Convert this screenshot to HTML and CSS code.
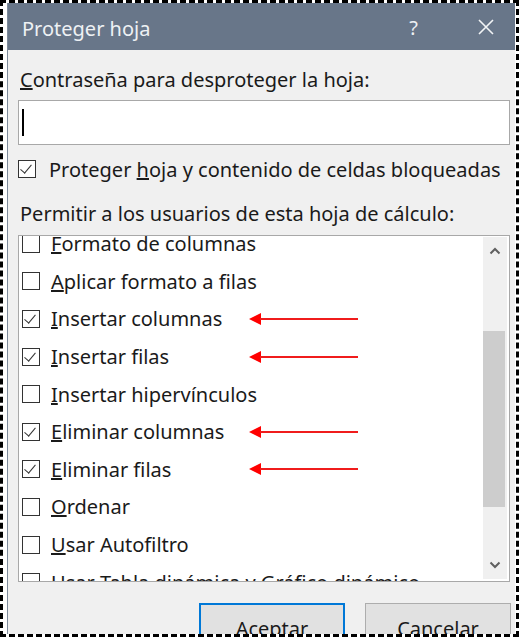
FILE: index.html
```html
<!DOCTYPE html>
<html lang="es">
<head>
    <meta charset="UTF-8">
    <title>Proteger hoja</title>
    <link rel="stylesheet" href="styles.css">
</head>
<body>
    <div class="frame">
        <div class="dialog">
            <div class="titlebar">
                <span class="title">Proteger hoja</span>
                <span class="help">?</span>
                <svg class="close" width="16" height="16" viewBox="0 0 16 16"><path d="M1 1 L15 15 M15 1 L1 15" stroke="#f2f4f6" stroke-width="1.6" fill="none"/></svg>
            </div>
            <div class="body">
                <label class="label"><u>C</u>ontraseña para desproteger la hoja:</label>
                <div class="input"><span class="caret"></span></div>
                <div class="check-row">
                    <span class="box checked"></span>
                    <span>Proteger <u>h</u>oja y contenido de celdas bloqueadas</span>
                </div>
                <label class="label">Permitir a los usuarios de esta hoja de cálculo:</label>
                <div class="list">
                    <div class="items">
                        <div class="item"><span class="box"></span><span><u>F</u>ormato de columnas</span></div>
                        <div class="item"><span class="box"></span><span><u>A</u>plicar formato a filas</span></div>
                        <div class="item marked"><span class="box checked"></span><span><u>I</u>nsertar columnas</span></div>
                        <div class="item marked"><span class="box checked"></span><span><u>I</u>nsertar filas</span></div>
                        <div class="item"><span class="box"></span><span><u>I</u>nsertar hipervínculos</span></div>
                        <div class="item marked"><span class="box checked"></span><span><u>E</u>liminar columnas</span></div>
                        <div class="item marked"><span class="box checked"></span><span><u>E</u>liminar filas</span></div>
                        <div class="item"><span class="box"></span><span><u>O</u>rdenar</span></div>
                        <div class="item"><span class="box"></span><span><u>U</u>sar Autofiltro</span></div>
                        <div class="item"><span class="box"></span><span><u>U</u>sar Tabla dinámica y Gráfico dinámico</span></div>
                    </div>
                    <div class="scrollbar">
                        <svg width="12" height="8" viewBox="0 0 12 8"><path d="M1.5 6.5 L6 2 L10.5 6.5" stroke="#606060" stroke-width="2" fill="none"/></svg>
                        <div class="track"><div class="thumb"></div></div>
                        <svg width="12" height="8" viewBox="0 0 12 8"><path d="M1.5 1.5 L6 6 L10.5 1.5" stroke="#606060" stroke-width="2" fill="none"/></svg>
                    </div>
                </div>
                <div class="buttons">
                    <button class="btn default">Aceptar</button>
                    <button class="btn">Cancelar</button>
                </div>
            </div>
        </div>
    </div>
</body>
</html>
```

FILE: styles.css
```css
html, body {
    margin: 0;
    background: #fff;
}
.frame {
    width: 519px;
    height: 637px;
    box-sizing: border-box;
    border: 3px dashed #000;
    overflow: hidden;
    font-family: "Noto Sans", "Open Sans", sans-serif;
}
.dialog {
    margin-left: 4px;
    width: 507px;
    height: 640px;
    background: #f0f0f0;
    border-left: 1px solid #7d8a9b;
}
.titlebar {
    height: 47px;
    background: #687689;
    display: flex;
    align-items: center;
    color: #eef1f4;
    padding: 0 21px 0 14px;
}
.title {
    font-size: 20px;
    flex: 1;
    margin-top: 4px;
}
.help {
    font-size: 20px;
    margin-right: 60px;
    margin-top: 2px;
}
.close {
    margin-top: 1px;
}
.body {
    padding: 15px 0 0 10px;
    color: #1a1a1a;
    font-size: 20px;
}
.label {
    display: block;
    margin-left: 2px;
    line-height: 30px;
}
.input {
    width: 490px;
    height: 43px;
    margin-top: 5px;
    background: #fff;
    border: 1px solid #a8a8a8;
    display: flex;
    align-items: center;
}
.caret {
    width: 2px;
    height: 27px;
    margin-left: 3px;
    background: #000;
}
.check-row {
    display: flex;
    align-items: center;
    gap: 13px;
    margin: 11px 0 17px 0;
    height: 26px;
}
.box {
    width: 16px;
    height: 16px;
    border: 1.5px solid #333;
    background: #fff;
    flex: none;
    position: relative;
}
.box.checked::after {
    content: "";
    position: absolute;
    left: 4px;
    top: 1px;
    width: 5px;
    height: 10px;
    border: solid #333;
    border-width: 0 1.5px 1.5px 0;
    transform: rotate(40deg);
}
.list {
    width: 490px;
    height: 345px;
    margin-top: 6px;
    background: #fff;
    border: 1px solid #a8a8a8;
    display: flex;
    overflow: hidden;
}
.items {
    flex: 1;
    margin-top: -11px;
    padding-left: 3px;
}
.item {
    height: 37.6px;
    display: flex;
    align-items: center;
    gap: 11px;
    position: relative;
    white-space: nowrap;
}
.item.marked::after {
    content: "";
    position: absolute;
    left: 238px;
    top: 50%;
    width: 98px;
    height: 2px;
    margin-top: -1px;
    background: #f01c1c;
}
.item.marked::before {
    content: "";
    position: absolute;
    left: 227px;
    top: 50%;
    margin-top: -6px;
    border-right: 12px solid #f00;
    border-top: 6px solid transparent;
    border-bottom: 6px solid transparent;
}
.scrollbar {
    width: 24px;
    margin: 1px 2px 2px 0;
    background: #f0f0f0;
    display: flex;
    flex-direction: column;
    align-items: center;
}
.scrollbar svg {
    margin: 10px 0;
}
.track {
    flex: 1;
    width: 100%;
    padding-top: 66px;
}
.thumb {
    height: 176px;
    margin-right: 2px;
    background: #cdcdcd;
}
.buttons {
    display: flex;
    justify-content: flex-end;
    gap: 20px;
    margin: 21px 4px 0 0;
}
.btn {
    width: 146px;
    height: 42px;
    font-family: inherit;
    font-size: 20px;
    color: #1a1a1a;
    background: #e1e1e1;
    border: 1px solid #adadad;
    padding-top: 10px;
}
.btn.default {
    border: 2px solid #0078d7;
}
```
